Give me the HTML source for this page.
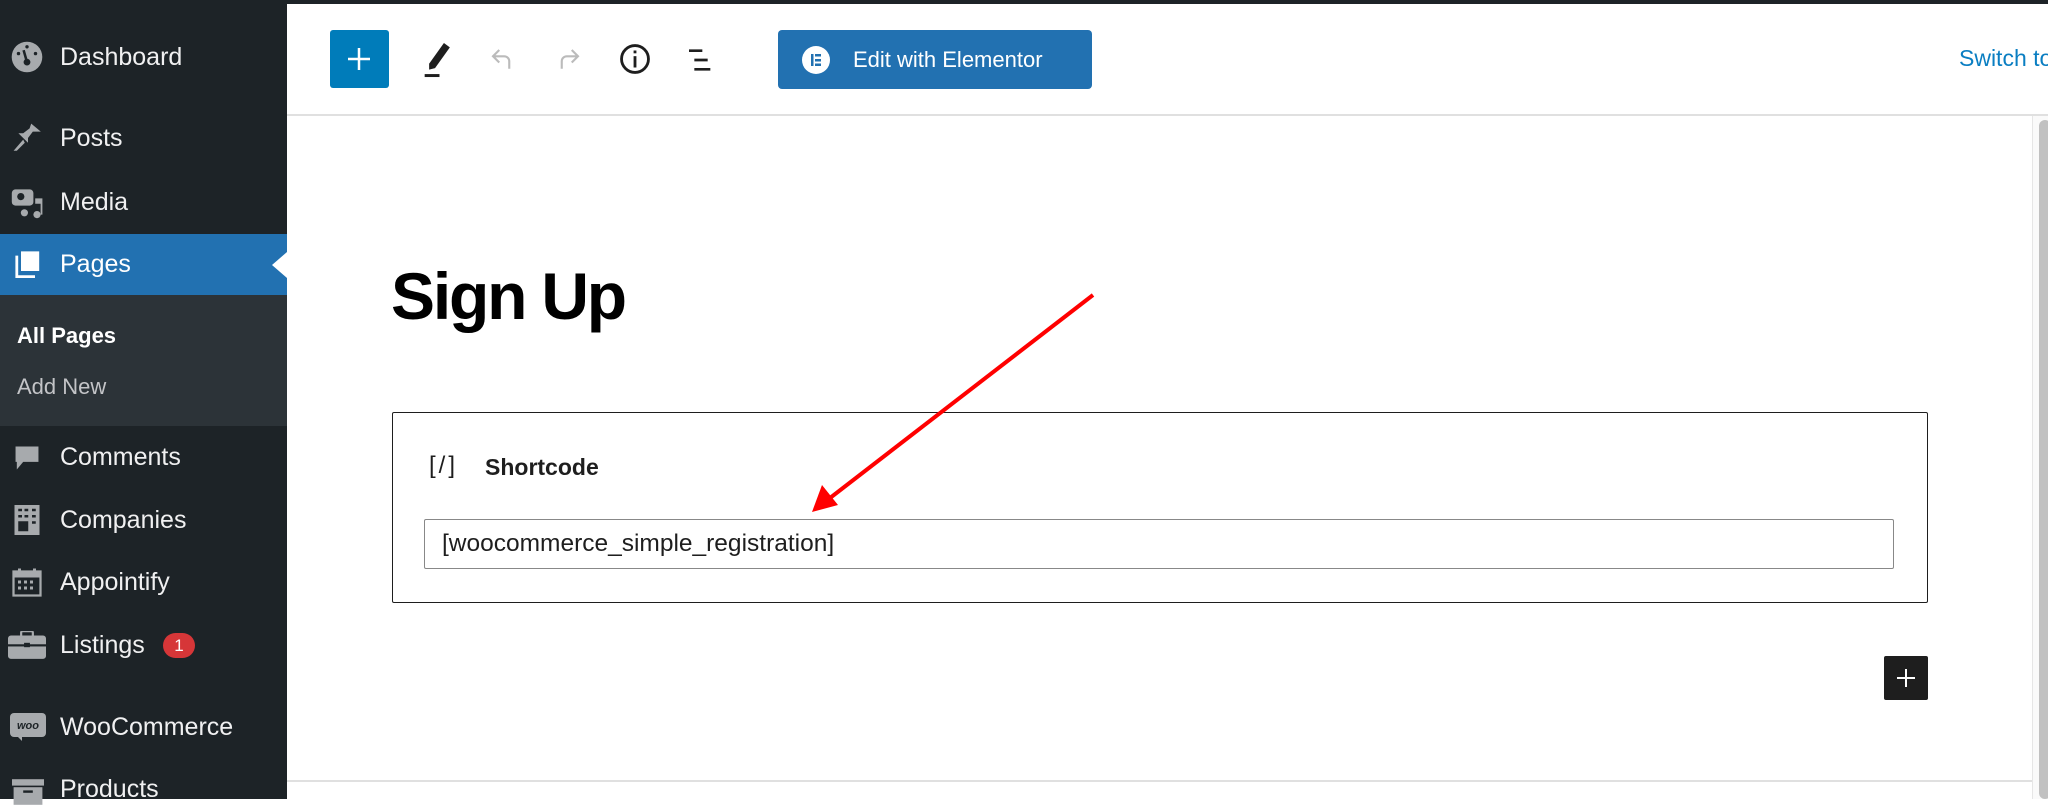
<!DOCTYPE html>
<html><head><meta charset="utf-8"><style>
*{margin:0;padding:0;box-sizing:border-box}
body{width:2048px;height:799px;overflow:hidden;background:#fff;font-family:"Liberation Sans",sans-serif;position:relative}
.abs{position:absolute}
#top{left:0;top:0;width:2048px;height:4px;background:#1d2327}
#side{left:0;top:0;width:287px;height:799px;background:#1d2327}
.mi{position:absolute;left:60px;color:#f0f0f1;font-size:25px;line-height:30px;transform:translateY(-50%)}
.ic{position:absolute;left:10px;transform:translateY(-50%)}
#sub{left:0;top:295px;width:287px;height:131px;background:#2c3338}
#pg{left:0;top:234px;width:287px;height:61px;background:#2271b1}
.sm{position:absolute;left:17px;font-size:22px;transform:translateY(-50%)}
</style></head><body>
<div id="side" class="abs"></div>
<div id="top" class="abs"></div>
<div id="sub" class="abs"></div>
<div id="pg" class="abs"></div>
<div class="abs" style="left:272px;top:252px;width:0;height:0;border-top:13px solid transparent;border-bottom:13px solid transparent;border-right:15px solid #fff"></div>

<svg class="ic" style="top:57px" width="34" height="34" viewBox="0 0 20 20"><circle cx="10" cy="10" r="9" fill="#a7aaad"/><circle cx="10" cy="13" r="2" fill="#1d2327"/><path d="M10 13 L8 6" stroke="#1d2327" stroke-width="1.5"/><circle cx="5" cy="8" r="1" fill="#1d2327"/><circle cx="15" cy="8" r="1" fill="#1d2327"/><circle cx="10" cy="4" r="1" fill="#1d2327"/></svg>
<div class="mi" style="top:57px">Dashboard</div>
<svg class="ic" style="top:138px" width="36" height="32" viewBox="0 0 20 20"><path d="M18 6 L12 1 L11 4 L7 7 L4 7 L10 13 L10 10 L13 6 L16 6Z M7 11 L1 18 L3 18 L8 13Z" fill="#a7aaad"/></svg>
<div class="mi" style="top:138px">Posts</div>
<svg class="ic" style="top:202px" width="36" height="36" viewBox="0 0 20 20"><rect x="1" y="3" width="12" height="9" rx="2" fill="#a7aaad"/><circle cx="6" cy="7" r="2" fill="#1d2327"/><path d="M14 8h4v9h-1v-6h-3z" fill="#a7aaad"/><circle cx="15" cy="17" r="2" fill="#a7aaad"/><circle cx="8" cy="16" r="2" fill="#a7aaad"/></svg>
<div class="mi" style="top:202px">Media</div>
<svg class="ic" style="top:264px;left:14px" width="28" height="30" viewBox="0 0 20 20"><path d="M5 1h13v14H5z" fill="#fff"/><path d="M2 4v15h13" stroke="#fff" stroke-width="2" fill="none"/></svg>
<div class="mi" style="top:264px;color:#fff">Pages</div>
<div class="sm" style="top:336px;color:#fff;font-weight:bold">All Pages</div>
<div class="sm" style="top:387px;color:#c3c4c7">Add New</div>
<svg class="ic" style="top:458px;left:14px" width="26" height="28" viewBox="0 0 20 22"><path d="M1 2h18v12h-12l-5 6v-6h-1z" fill="#a7aaad"/></svg>
<div class="mi" style="top:457px">Comments</div>
<svg class="ic" style="top:520px;left:14px" width="26" height="30" viewBox="0 0 20 24"><rect x="0" y="0" width="20" height="24" fill="#a7aaad"/><g fill="#1d2327"><rect x="3" y="3" width="3" height="2"/><rect x="8" y="3" width="3" height="2"/><rect x="14" y="3" width="3" height="2"/><rect x="3" y="8" width="3" height="2"/><rect x="8" y="8" width="3" height="2"/><rect x="14" y="8" width="3" height="2"/><rect x="3" y="13" width="8" height="8"/><rect x="14" y="13" width="3" height="2"/></g></svg>
<div class="mi" style="top:520px">Companies</div>
<svg class="ic" style="top:582px;left:12px" width="30" height="30" viewBox="0 0 20 20"><rect x="1" y="3" width="18" height="16" fill="none" stroke="#a7aaad" stroke-width="1.5"/><rect x="1" y="3" width="18" height="4" fill="#a7aaad"/><rect x="4" y="1" width="2" height="4" fill="#a7aaad"/><rect x="14" y="1" width="2" height="4" fill="#a7aaad"/><g fill="#a7aaad"><rect x="4" y="9" width="2" height="2"/><rect x="8" y="9" width="2" height="2"/><rect x="12" y="9" width="2" height="2"/><rect x="4" y="13" width="2" height="2"/><rect x="8" y="13" width="2" height="2"/><rect x="12" y="13" width="2" height="2"/></g></svg>
<div class="mi" style="top:582px">Appointify</div>
<svg class="ic" style="top:645px;left:8px" width="38" height="28" viewBox="0 0 26 19"><rect x="9" y="0" width="8" height="4" rx="1" fill="none" stroke="#a7aaad" stroke-width="1.5"/><rect x="0" y="3" width="26" height="16" rx="2" fill="#a7aaad"/><rect x="0" y="9" width="26" height="1.5" fill="#1d2327"/><rect x="11" y="8" width="4" height="3" fill="#1d2327"/></svg>
<div class="mi" style="top:645px">Listings</div>
<div class="abs" style="left:163px;top:633px;width:32px;height:25px;border-radius:13px;background:#d63638;color:#fff;font-size:17px;text-align:center;line-height:25px">1</div>
<svg class="ic" style="top:727px" width="36" height="28" viewBox="0 0 36 28"><rect x="0" y="0" width="36" height="24" rx="4" fill="#a7aaad"/><path d="M8 24 l4 4 l0-4z" fill="#a7aaad"/><text x="18" y="16" font-size="11" font-family="Liberation Sans" text-anchor="middle" fill="#1d2327" font-style="italic" font-weight="bold">woo</text></svg>
<div class="mi" style="top:727px">WooCommerce</div>
<svg class="ic" style="top:792px;left:12px" width="32" height="26" viewBox="0 0 20 16"><rect x="0" y="0" width="20" height="4" fill="#a7aaad"/><rect x="1" y="5" width="18" height="11" fill="#a7aaad"/><rect x="7" y="7" width="6" height="1.5" fill="#1d2327"/></svg>
<div class="mi" style="top:789px">Products</div>

<!-- toolbar -->
<div class="abs" style="left:287px;top:114px;width:1761px;height:2px;background:#e0e0e0"></div>
<div class="abs" style="left:330px;top:30px;width:59px;height:58px;background:#007cba;border-radius:3px"></div>
<svg class="abs" style="left:344px;top:44px" width="30" height="30" viewBox="0 0 30 30"><path d="M15 4v22M4 15h22" stroke="#fff" stroke-width="2.5"/></svg>
<svg class="abs" style="left:420px;top:40px" width="36" height="40" viewBox="0 0 24 27"><path d="M16 2 L20 5 L10 19 L6 20 L6 16Z" fill="#1e1e1e"/><rect x="3" y="23" width="10" height="2" fill="#1e1e1e"/></svg>
<svg class="abs" style="left:486px;top:45px" width="34" height="30" viewBox="0 0 24 24"><path d="M17 19v-6a4 4 0 0 0-4-4H5M9 4L4 9l5 5" stroke="#bbb" stroke-width="1.7" fill="none"/></svg>
<svg class="abs" style="left:551px;top:45px" width="34" height="30" viewBox="0 0 24 24"><path d="M7 19v-6a4 4 0 0 1 4-4h8M15 4l5 5-5 5" stroke="#bbb" stroke-width="1.7" fill="none"/></svg>
<svg class="abs" style="left:618px;top:42px" width="34" height="34" viewBox="0 0 24 24"><circle cx="12" cy="12" r="9.5" stroke="#1e1e1e" stroke-width="2" fill="none"/><rect x="11" y="10" width="2" height="8" fill="#1e1e1e"/><rect x="11" y="6" width="2" height="2" fill="#1e1e1e"/></svg>
<svg class="abs" style="left:684px;top:44px" width="34" height="32" viewBox="0 0 24 24"><path d="M3 5h10M7 12h10M7 19h12" stroke="#1e1e1e" stroke-width="2"/></svg>
<div class="abs" style="left:778px;top:30px;width:314px;height:59px;background:#2271b1;border-radius:4px;color:#fff;font-size:22px;line-height:59px;padding-left:75px">Edit with Elementor</div>
<svg class="abs" style="left:801px;top:45px" width="30" height="30" viewBox="0 0 30 30"><circle cx="15" cy="15" r="14" fill="#fff"/><rect x="10" y="9" width="2.5" height="12" fill="#2271b1"/><rect x="14" y="9" width="6" height="2.5" fill="#2271b1"/><rect x="14" y="14" width="6" height="2.5" fill="#2271b1"/><rect x="14" y="18.5" width="6" height="2.5" fill="#2271b1"/></svg>
<div class="abs" style="left:1959px;top:45px;font-size:23px;color:#0a7ec2;white-space:nowrap">Switch to</div>
<!-- scrollbar -->
<div class="abs" style="left:2032px;top:116px;width:16px;height:683px;background:#fafafa;border-left:1px solid #e6e6e6"></div>
<div class="abs" style="left:2039px;top:120px;width:12px;height:679px;background:#c1c1c1;border-radius:6px"></div>
<div class="abs" style="left:287px;top:780px;width:1745px;height:2px;background:#e0e0e0"></div>

<!-- content -->
<div class="abs" style="left:391px;top:256px;font-size:66px;font-weight:bold;letter-spacing:-2.2px;color:#000;line-height:80px">Sign Up</div>
<div class="abs" style="left:392px;top:412px;width:1536px;height:191px;border:1.5px solid #1e1e1e;border-radius:2px"></div>
<div class="abs" style="left:429px;top:452px;font-size:24px;color:#1e1e1e;letter-spacing:3px">[/]</div>
<div class="abs" style="left:485px;top:454px;font-size:23px;font-weight:bold;color:#1e1e1e">Shortcode</div>
<div class="abs" style="left:424px;top:519px;width:1470px;height:50px;border:1.5px solid #888;border-radius:2px"></div>
<div class="abs" style="left:442px;top:530px;font-size:24.5px;color:#1e1e1e">[woocommerce_simple_registration]</div>
<div class="abs" style="left:1884px;top:656px;width:44px;height:44px;background:#1e1e1e;border-radius:2px"></div>
<svg class="abs" style="left:1894px;top:666px" width="24" height="24" viewBox="0 0 24 24"><path d="M12 3v18M3 12h18" stroke="#fff" stroke-width="2"/></svg>

<svg class="abs" style="left:0;top:0" width="2048" height="799"><line x1="1093" y1="295" x2="830" y2="498" stroke="#f00" stroke-width="4"/><path d="M812 512 L822 485 L838 505Z" fill="#f00"/></svg>
</body></html>
